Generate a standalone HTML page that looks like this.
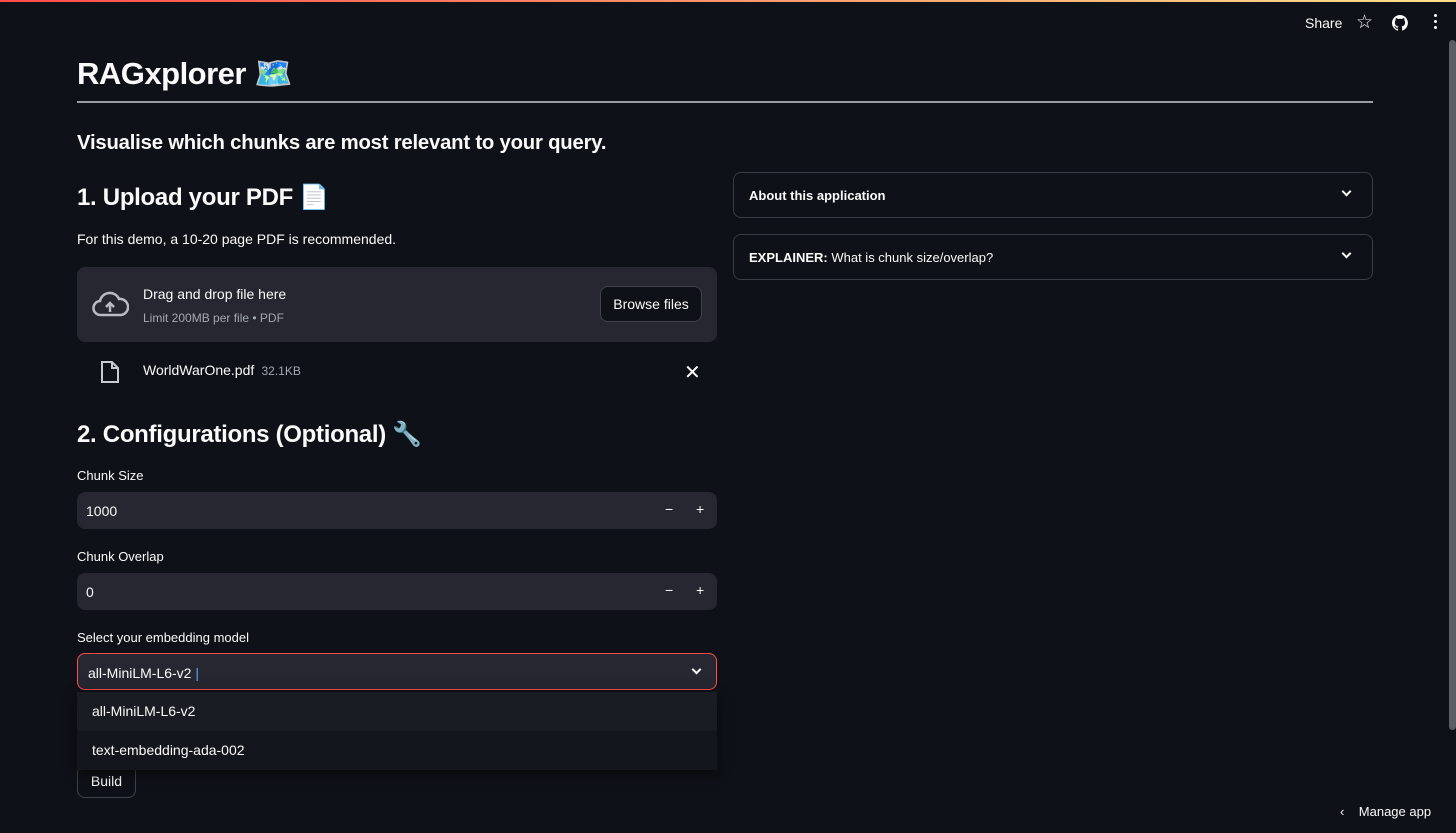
<!DOCTYPE html>
<html><head><meta charset="utf-8"><style>
*{box-sizing:border-box;margin:0;padding:0}
body{width:1456px;height:833px;background:#0e1117;color:#fafafa;font-family:"Liberation Sans",sans-serif;position:relative;overflow:hidden}
.a{position:absolute}
.top{left:0;top:0;width:1456px;height:2px;background:linear-gradient(90deg,#ff4b4b,#ffe08a)}
h1{position:absolute;left:77px;top:55px;font-size:31px;font-weight:bold;letter-spacing:-0.5px}
.hr{left:77px;top:101px;width:1296px;height:2px;background:#9a9ca3}
.b{font-weight:bold}
.box{background:#262730;border-radius:8px}
.num{left:77px;width:640px;height:37px;border-radius:8px;background:#262730;font-size:14px}
.lbl{font-size:13px;left:77px}
.exp{left:733px;width:640px;height:46px;border:1px solid #3a3c46;border-radius:8px;font-size:13px}
.chev{position:absolute;right:22px;top:15px;width:7px;height:7px;border-right:2px solid #fafafa;border-bottom:2px solid #fafafa;transform:rotate(45deg)}
.sb{left:1449px;top:40px;width:7px;height:690px;background:#5c5e66;border-radius:4px}
</style></head><body>
<div class="a top"></div>
<div class="a" style="left:1305px;top:15px;font-size:14px">Share</div>
<div class="a" style="left:1356px;top:11px;font-size:19px">☆</div>
<svg class="a" style="left:1392px;top:15px" width="16" height="16" viewBox="0 0 16 16"><path fill="#fafafa" d="M8 0a8 8 0 0 0-2.5 15.6c.4 0 .5-.2.5-.4v-1.5c-2.2.5-2.7-1-2.7-1-.4-.9-.9-1.200-.9-1.2-.7-.5.1-.5.1-.5.8.1 1.2.8 1.2.8.7 1.3 1.9.9 2.3.7.1-.5.3-.9.5-1.1-1.8-.2-3.6-.9-3.6-4 0-.9.3-1.6.8-2.1-.1-.2-.4-1 .1-2.1 0 0 .7-.2 2.2.8a7.5 7.5 0 0 1 4 0c1.5-1 2.2-.8 2.2-.8.4 1.1.2 1.9.1 2.1.5.6.8 1.3.8 2.1 0 3.1-1.9 3.8-3.6 4 .3.3.6.8.6 1.5v2.2c0 .2.1.5.6.4A8 8 0 0 0 8 0z"/></svg>
<div class="a" style="left:1434px;top:14px;width:3px"><div style="width:3px;height:3px;background:#fafafa;border-radius:50%;margin-bottom:3px"></div><div style="width:3px;height:3px;background:#fafafa;border-radius:50%;margin-bottom:3px"></div><div style="width:3px;height:3px;background:#fafafa;border-radius:50%"></div></div>
<div class="a sb"></div>
<h1>RAGxplorer 🗺️</h1>
<div class="a hr"></div>
<div class="a b" style="left:77px;top:132px;font-size:20.3px;letter-spacing:-0.2px">Visualise which chunks are most relevant to your query.</div>
<div class="a b" style="left:77px;top:183px;font-size:24px;letter-spacing:-0.3px">1. Upload your PDF 📄</div>
<div class="a" style="left:77px;top:231px;font-size:14px">For this demo, a 10-20 page PDF is recommended.</div>
<div class="a box" style="left:77px;top:267px;width:640px;height:75px"></div>
<svg class="a" style="left:92px;top:290px" width="37" height="30" viewBox="0 0 37 30"><path d="M9 25a7 7 0 0 1-1-14 10 10 0 0 1 19-2 8 8 0 0 1 2 16z" fill="none" stroke="#b8bac4" stroke-width="2.5"/><path d="M18 22v-9m-4 4 4-4 4 4" stroke="#b8bac4" stroke-width="2.5" fill="none"/></svg>
<div class="a" style="left:143px;top:286px;font-size:14px">Drag and drop file here</div>
<div class="a" style="left:143px;top:311px;font-size:12px;color:#a3a8b4">Limit 200MB per file • PDF</div>
<div class="a" style="left:600px;top:286px;width:102px;height:36px;border:1px solid #41434c;border-radius:8px;background:#0e1117;font-size:14px;text-align:center;line-height:34px">Browse files</div>
<svg class="a" style="left:100px;top:360px" width="20" height="24" viewBox="0 0 20 24"><path d="M2 2h10l6 6v14H2z M12 2v6h6" fill="none" stroke="#c8cad2" stroke-width="2"/></svg>
<div class="a" style="left:143px;top:362px;font-size:14px">WorldWarOne.pdf <span style="font-size:12px;color:#a3a8b4">&nbsp;32.1KB</span></div>
<div class="a" style="left:684px;top:360px;font-size:20px">✕</div>
<div class="a b" style="left:77px;top:420px;font-size:24px;letter-spacing:-0.3px">2. Configurations (Optional) 🔧</div>
<div class="a lbl" style="top:468px">Chunk Size</div>
<div class="a num" style="top:492px"><span class="a" style="left:9px;top:11px">1000</span><span class="a" style="left:588px;top:9px">−</span><span class="a" style="left:619px;top:9px">+</span></div>
<div class="a lbl" style="top:549px">Chunk Overlap</div>
<div class="a num" style="top:573px"><span class="a" style="left:9px;top:11px">0</span><span class="a" style="left:588px;top:9px">−</span><span class="a" style="left:619px;top:9px">+</span></div>
<div class="a lbl" style="top:630px">Select your embedding model</div>
<div class="a num" style="top:653px;border:1px solid #ff4b4b"><span class="a" style="left:10px;top:11px">all-MiniLM-L6-v2 <span style="color:#5aa0ff">|</span></span><div class="chev" style="top:12px;right:16px"></div></div>
<div class="a" style="left:77px;top:764px;width:59px;height:34px;border:1px solid #41434c;border-radius:8px;font-size:14px;text-align:center;line-height:32px">Build</div>
<div class="a" style="left:77px;top:692px;width:640px;height:78px;background:#0e1117;box-shadow:0 4px 12px rgba(0,0,0,.5)">
<div style="height:39px;background:#1a1c24;padding:11px 15px;font-size:14px">all-MiniLM-L6-v2</div>
<div style="height:39px;background:#14161d;padding:11px 15px;font-size:14px">text-embedding-ada-002</div></div>
<div class="a exp" style="top:172px"><span class="a b" style="left:15px;top:15px">About this application</span><div class="chev"></div></div>
<div class="a exp" style="top:234px"><span class="a" style="left:15px;top:15px"><b>EXPLAINER:</b> What is chunk size/overlap?</span><div class="chev"></div></div>
<div class="a" style="left:1340px;top:804px;font-size:13px">‹ &nbsp;&nbsp;&nbsp;Manage app</div>
</body></html>
